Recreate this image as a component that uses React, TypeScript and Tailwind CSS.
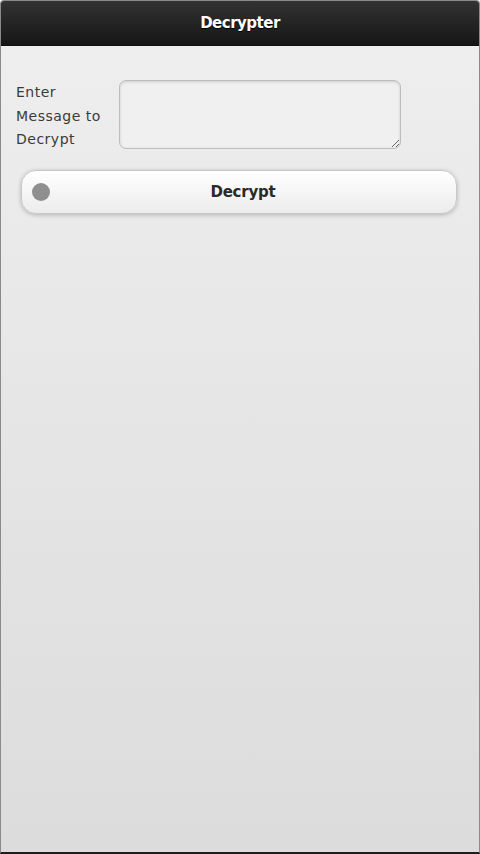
export default function App(): React.JSX.Element {
  return (
    <div
      className="flex h-[854px] w-[480px] flex-col overflow-hidden rounded-t-[4px] border-x border-t border-b-2 border-x-[#8a8a8a] border-t-[#8a8a8a] border-b-[#1c1c1c] bg-gradient-to-b from-[#efefef] to-[#dcdcdc]"
      style={{ fontFamily: '"DejaVu Sans", Verdana, sans-serif' }}
    >
      {/* Header */}
      <header className="flex h-[45px] shrink-0 items-center justify-center border-b border-[#111] bg-gradient-to-b from-[#333] to-[#161616]">
        <h1 className="text-[15px] font-bold text-white [text-shadow:0_1px_1px_#000] tracking-[-0.5px]">
          Decrypter
        </h1>
      </header>

      {/* Body */}
      <main className="flex flex-col px-[20px] pt-[34px]">
        <div className="flex h-[69px] items-start">
          <label className="w-[103px] shrink-0 -ml-[5px] mt-[1px] text-[14px] leading-[23.5px] text-[#3a3a3a] tracking-[0.5px]">
            Enter
            <br />
            Message to
            <br />
            Decrypt
          </label>
          <textarea className="h-[69px] w-[282px] resize rounded-[7px] border border-[#bdbdbd] bg-[#f0f0f0] shadow-[inset_0_1px_3px_rgba(0,0,0,0.15)] outline-none" />
        </div>

        <button
          type="button"
          className="relative mt-[21px] flex h-[44px] w-[436px] items-center justify-center rounded-[15px] border border-[#c8c8c8] bg-gradient-to-b from-[#ffffff] to-[#ececec] shadow-[0_1px_4px_rgba(0,0,0,0.25)]"
        >
          <span className="absolute left-[10px] top-1/2 size-[18px] -translate-y-1/2 rounded-full bg-[#8f8f8f]" />
          <span className="ml-[8px] text-[15px] font-bold text-[#2a2a2a] tracking-[-0.2px]">Decrypt</span>
        </button>
      </main>
    </div>
  );
}
